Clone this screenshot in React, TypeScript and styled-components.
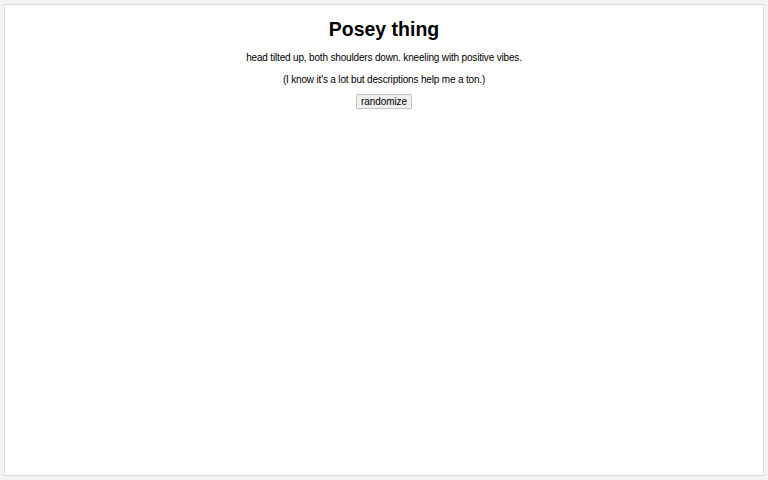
import React, { useState } from 'react'
import styled, { createGlobalStyle } from 'styled-components'

const GlobalStyle = createGlobalStyle`
  html, body {
    margin: 0;
    background: #f3f3f3;
  }
  body {
    padding: 4px;
    font-family: "Liberation Sans", Arial, sans-serif;
  }
`

const Panel = styled.div`
  box-sizing: border-box;
  height: 472px;
  background: #fff;
  border: 1px solid #dcdcdc;
  display: flex;
  flex-direction: column;
  align-items: center;
  padding-top: 13px;
`

const Title = styled.h1`
  margin: 0;
  font-size: 19.5px;
  font-weight: bold;
  color: #000;
`

const Description = styled.p`
  margin: 11px 0 0;
  font-size: 10px;
  line-height: 12px;
  letter-spacing: -0.17px;
  color: #000;

  & + & {
    margin-top: 10px;
  }
`

const Button = styled.button`
  margin-top: 8px;
  font-family: "Liberation Sans", Arial, sans-serif;
  font-size: 10px;
  line-height: 11px;
  letter-spacing: -0.1px;
  padding: 1px 4px;
  color: #000;
  background: #efefef;
  border: 1px solid #c4c4c4;
  border-radius: 1px;
`

const descriptions = [
  'head tilted up, both shoulders down. kneeling with positive vibes.',
  'head down, one shoulder raised. standing with quiet energy.',
  'head turned left, shoulders relaxed. sitting with curious vibes.',
]

export default function App() {
  const [index, setIndex] = useState(0)

  return (
    <>
      <GlobalStyle />
      <Panel>
        <Title>Posey thing</Title>
        <Description>{descriptions[index]}</Description>
        <Description>(I know it's a lot but descriptions help me a ton.)</Description>
        <Button onClick={() => setIndex((index + 1) % descriptions.length)}>randomize</Button>
      </Panel>
    </>
  )
}
